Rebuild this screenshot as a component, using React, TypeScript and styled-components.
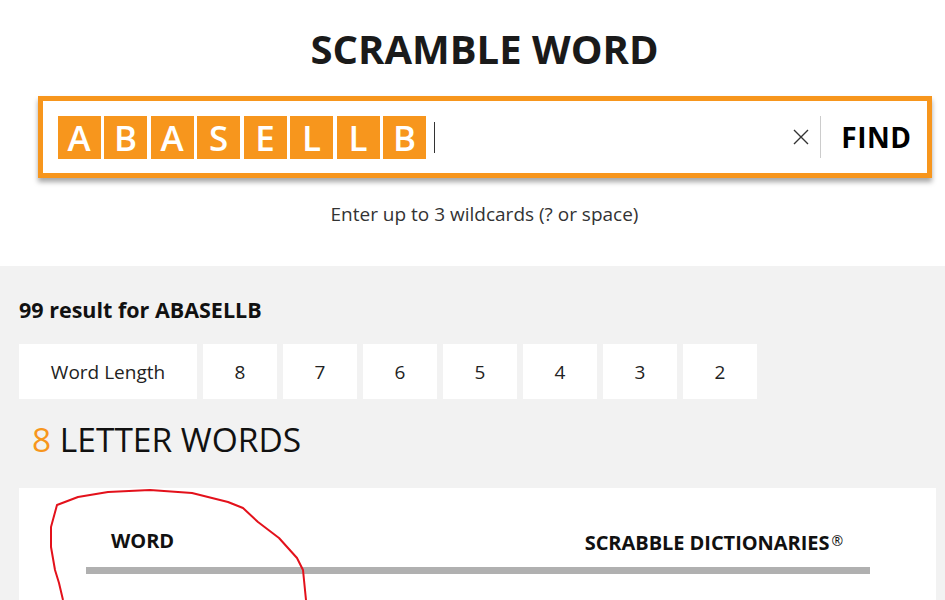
import React from "react";
import styled, { createGlobalStyle } from "styled-components";

const ORANGE = "#f7961d";

const GlobalStyle = createGlobalStyle`
  body {
    margin: 0;
    font-family: "Open Sans", "Liberation Sans", sans-serif;
    color: #111;
    background: #fff;
  }
`;

const Page = styled.div`
  position: relative;
  width: 945px;
  height: 600px;
  overflow: hidden;
`;

const Header = styled.header`
  display: flex;
  flex-direction: column;
  align-items: center;
  padding: 23px 0 0 24px;
  height: 266px;
  box-sizing: border-box;
`;

const Title = styled.h1`
  margin: 0;
  font-size: 40px;
  font-weight: 700;
  line-height: 52px;
  color: #1a1a1a;
`;

const SearchBox = styled.div`
  margin-top: 21px;
  width: 894px;
  height: 82px;
  box-sizing: border-box;
  border: 5px solid ${ORANGE};
  background: #fff;
  box-shadow: 0 4px 5px rgba(0, 0, 0, 0.35);
  display: flex;
  align-items: center;
  padding: 0 15px;
`;

const Tiles = styled.div`
  display: flex;
  gap: 3.5px;
`;

const Tile = styled.span`
  width: 43px;
  height: 43px;
  background: ${ORANGE};
  color: #fff;
  font-size: 35px;
  font-weight: 600;
  display: flex;
  align-items: center;
  justify-content: center;
  line-height: 1;
`;

const Caret = styled.span`
  width: 1px;
  height: 31px;
  background: #333;
  margin-left: 8px;
`;

const Spacer = styled.div`
  flex: 1;
`;

const Clear = styled.button`
  border: none;
  background: none;
  padding: 0;
  width: 18px;
  height: 18px;
  display: flex;
  align-items: center;
  justify-content: center;
  cursor: pointer;
  margin-right: 10px;
`;

const Divider = styled.span`
  width: 1px;
  height: 42px;
  background: #ccc;
  margin-right: 20px;
`;

const Find = styled.button`
  border: none;
  background: none;
  padding: 0;
  font-family: inherit;
  font-size: 28px;
  font-weight: 700;
  color: #000;
  letter-spacing: 0.5px;
  cursor: pointer;
`;

const Hint = styled.p`
  margin: 23px 0 0;
  font-size: 19px;
  color: #333;
`;

const Results = styled.section`
  background: #f2f2f2;
  padding: 29px 9px 0 19px;
  height: 334px;
  box-sizing: border-box;
`;

const Count = styled.h2`
  margin: 0;
  font-size: 21.5px;
  font-weight: 700;
  line-height: 30px;
  color: #111;
`;

const LengthRow = styled.div`
  display: flex;
  gap: 6px;
  margin-top: 19px;
`;

const LengthCell = styled.div<{ $wide?: boolean }>`
  width: ${(p) => (p.$wide ? "178px" : "74px")};
  height: 55px;
  background: #fff;
  display: flex;
  align-items: center;
  justify-content: center;
  font-size: 19px;
  color: #222;
`;

const Heading = styled.h3`
  margin: 18px 0 0 13px;
  font-size: 33.5px;
  font-weight: 400;
  line-height: 44px;
  color: #111;
`;

const Accent = styled.span`
  color: ${ORANGE};
`;

const Card = styled.div`
  margin-top: 27px;
  background: #fff;
  height: 200px;
  padding: 38px 66px 0 67px;
  box-sizing: border-box;
`;

const TableHead = styled.div`
  display: flex;
  justify-content: space-between;
  padding: 0 27px 0 25px;
  font-size: 20px;
  font-weight: 700;
  letter-spacing: -0.05px;
  line-height: 30px;
  color: #111;
`;

const Reg = styled.sup`
  font-size: 14px;
  font-weight: 400;
  vertical-align: 4px;
  margin-left: 2px;
`;

const Rule = styled.div`
  margin-top: 9px;
  height: 7px;
  background: #b0b0b0;
`;

const Scribble = styled.svg`
  position: absolute;
  left: 0;
  top: 0;
  pointer-events: none;
`;

const letters = "ABASELLB".split("");
const lengths = [8, 7, 6, 5, 4, 3, 2];

export default function App() {
  return (
    <Page>
      <GlobalStyle />
      <Header>
        <Title>SCRAMBLE WORD</Title>
        <SearchBox>
          <Tiles>
            {letters.map((l, i) => (
              <Tile key={i}>{l}</Tile>
            ))}
          </Tiles>
          <Caret />
          <Spacer />
          <Clear aria-label="clear">
            <svg width="16" height="16" viewBox="0 0 16 16">
              <path d="M1 1 L15 15 M15 1 L1 15" stroke="#333" strokeWidth="1.4" />
            </svg>
          </Clear>
          <Divider />
          <Find>FIND</Find>
        </SearchBox>
        <Hint>Enter up to 3 wildcards (? or space)</Hint>
      </Header>
      <Results>
        <Count>99 result for ABASELLB</Count>
        <LengthRow>
          <LengthCell $wide>Word Length</LengthCell>
          {lengths.map((n) => (
            <LengthCell key={n}>{n}</LengthCell>
          ))}
        </LengthRow>
        <Heading>
          <Accent>8</Accent> LETTER WORDS
        </Heading>
        <Card>
          <TableHead>
            <span>WORD</span>
            <span>
              SCRABBLE DICTIONARIES<Reg>®</Reg>
            </span>
          </TableHead>
          <Rule />
        </Card>
      </Results>
      <Scribble width="945" height="600" viewBox="0 0 945 600">
        <path
          d="M63 600 L59 583 L55 570 L51 547 L51 527 L57 505 L78 497 L108 492 L150 490 L192 493 L228 502 L243 508 L258 522 L279 538 L297 558 L303 570 L306 600"
          fill="none"
          stroke="#e3111b"
          strokeWidth="2"
          strokeLinejoin="round"
        />
      </Scribble>
    </Page>
  );
}
